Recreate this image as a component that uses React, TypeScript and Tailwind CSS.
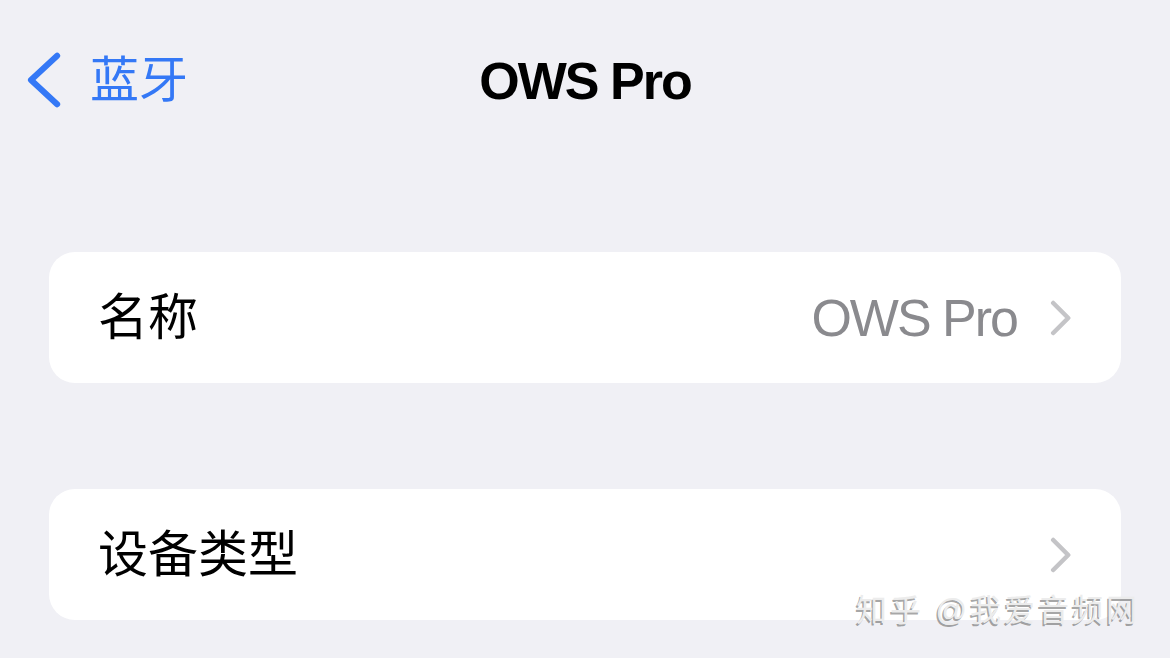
const cjk = "font-['Liberation_Sans','Noto_Sans_CJK_SC',sans-serif]";

function Chevron({ className, dir }: { className?: string; dir: "left" | "right" }) {
    return (
        <svg viewBox="0 0 40 60" className={className} fill="none" stroke="currentColor" strokeLinecap="round" strokeLinejoin="round">
            {dir === "left" ? <polyline points="33,4 5,30 33,56" /> : <polyline points="7,5 32,30 7,55" />}
        </svg>
    );
}

function Row({ label, value }: { label: string; value?: string }) {
    return (
        <div className="mx-[49px] h-[131px] rounded-[26px] bg-white flex items-center pl-[49px] pr-[48px]">
            <span className="text-[50px] text-black flex-1 leading-none">{label}</span>
            {value && (
                <span className="text-[52px] text-[#8a8a8e] tracking-[-2px] mr-[32px] leading-none">{value}</span>
            )}
            <Chevron dir="right" className="w-[24px] h-[36px] text-[#c4c4c7] [stroke-width:7.5]" />
        </div>
    );
}

export default function App() {
    return (
        <div className={`w-[1170px] h-[658px] bg-[#f0f0f5] overflow-hidden relative ${cjk}`}>
            {/* nav bar */}
            <div className="h-[162px] relative">
                <div className="flex items-center pl-[26px] pt-[52px] gap-[26px]">
                    <Chevron dir="left" className="w-[38px] h-[56px] text-[#3478f6] [stroke-width:6.5]" />
                    <span className="text-[49px] text-[#3478f6] leading-none">蓝牙</span>
                </div>
                <div className="absolute left-0 right-0 top-[55px] text-center text-[52px] font-bold tracking-[-2px] leading-none text-black">
                    OWS Pro
                </div>
            </div>

            <div className="mt-[90px] flex flex-col gap-[106px]">
                <Row label="名称" value="OWS Pro" />
                <Row label="设备类型" />
            </div>

            <div className="absolute right-[30px] bottom-[32px] text-[31px] leading-none text-[#ececec] tracking-[3px] [text-shadow:-1.5px_1.5px_0_rgba(90,90,90,0.55)]">
                知乎 @我爱音频网
            </div>
        </div>
    );
}
